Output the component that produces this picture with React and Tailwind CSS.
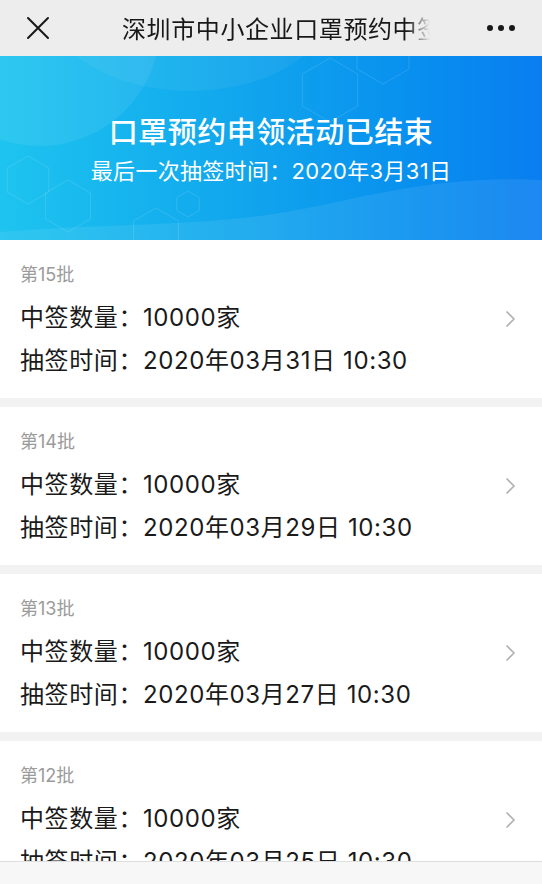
import React from 'react';

const batches = [
  { no: 15, count: '10000家', time: '2020年03月31日 10:30' },
  { no: 14, count: '10000家', time: '2020年03月29日 10:30' },
  { no: 13, count: '10000家', time: '2020年03月27日 10:30' },
  { no: 12, count: '10000家', time: '2020年03月25日 10:30' },
];

const font = { fontFamily: '"Noto Sans CJK SC", "Liberation Sans", sans-serif' };
const latin = { fontFamily: 'Inter, "Noto Sans CJK SC", sans-serif' };

function TopBar() {
  return (
    <div className="h-[56px] bg-[#ededed] flex items-center relative">
      <div className="w-[76px] flex justify-center">
        <svg width="24" height="24" viewBox="0 0 24 24" fill="none" stroke="#181818" strokeWidth="2" strokeLinecap="round">
          <path d="M2 2L22 22M22 2L2 22" />
        </svg>
      </div>
      <div
        className="ml-[46px] w-[308px] overflow-hidden whitespace-nowrap text-[24px] leading-[56px] tracking-[0.6px] text-[#181818]"
        style={{
          maskImage: 'linear-gradient(to right, black 285px, transparent 308px)',
          WebkitMaskImage: 'linear-gradient(to right, black 285px, transparent 308px)',
        }}
      >
        深圳市中小企业口罩预约中签查询
      </div>
      <div className="ml-auto mr-[27px] flex gap-[5px]">
        <span className="w-[6px] h-[6px] rounded-full bg-[#181818]" />
        <span className="w-[6px] h-[6px] rounded-full bg-[#181818]" />
        <span className="w-[6px] h-[6px] rounded-full bg-[#181818]" />
      </div>
    </div>
  );
}

function Hex({ x, y, r }) {
  const pts = [];
  for (let i = 0; i < 6; i++) {
    const a = (Math.PI / 3) * i + Math.PI / 6;
    pts.push(`${x + r * Math.cos(a)},${y + r * Math.sin(a)}`);
  }
  return <polygon points={pts.join(' ')} fill="none" stroke="rgba(255,255,255,0.12)" strokeWidth="1" />;
}

function Banner() {
  return (
    <div className="relative h-[184px] overflow-hidden bg-gradient-to-r from-[#1ec4ef] via-[#10a2ed] to-[#0a7ef0]">
      <svg className="absolute inset-0" width="542" height="184" viewBox="0 0 542 184">
        <circle cx="40" cy="-30" r="120" fill="rgba(255,255,255,0.07)" />
        <ellipse cx="190" cy="-50" rx="140" ry="85" fill="rgba(255,255,255,0.05)" />
        <path d="M0 184 L0 176 C100 168 180 170 260 160 C340 150 420 118 542 124 L542 184 Z" fill="rgba(255,255,255,0.08)" />
        <Hex x={383} y={-2} r={30} />
        <Hex x={330} y={34} r={32} />
        <Hex x={28} y={124} r={24} />
        <Hex x={68} y={150} r={26} />
        <Hex x={156} y={178} r={26} />
        <Hex x={188} y={148} r={13} />
      </svg>
      <div className="relative flex flex-col items-center pt-[54px] text-white">
        <div className="text-[29px] leading-[40px] font-medium tracking-[0.5px]">口罩预约申领活动已结束</div>
        <div className="mt-[6px] text-[22px] leading-[30px] tracking-[0.3px]" style={latin}>
          最后一次抽签时间：2020年3月31日
        </div>
      </div>
    </div>
  );
}

function BatchCard({ item }) {
  return (
    <div className="bg-white flex items-center pl-[20px] pr-[26px]">
      <div className="flex-1 pt-[22px] pb-[16px]" style={latin}>
        <div className="text-[18px] leading-[26px] text-[#9b9b9b]">第{item.no}批</div>
        <div className="mt-[8px] text-[24px] leading-[43px] tracking-[0.6px] text-[#1a1a1a]">中签数量：{item.count}</div>
        <div className="text-[24px] leading-[43px] tracking-[0.6px] text-[#1a1a1a]">抽签时间：{item.time}</div>
      </div>
      <svg width="11" height="18" viewBox="0 0 11 18" fill="none" stroke="#b2b2b2" strokeWidth="1.6">
        <path d="M1.5 1.5L9 9L1.5 16.5" />
      </svg>
    </div>
  );
}

export default function App() {
  return (
    <div className="w-[542px] h-[884px] overflow-hidden bg-[#f2f2f2] relative" style={font}>
      <TopBar />
      <Banner />
      <div className="flex flex-col gap-[9px]">
        {batches.map((b) => (
          <BatchCard key={b.no} item={b} />
        ))}
      </div>
      <div className="absolute bottom-0 left-0 right-0 h-[23px] bg-[#f7f7f7] border-t border-[#dedede]" />
    </div>
  );
}
